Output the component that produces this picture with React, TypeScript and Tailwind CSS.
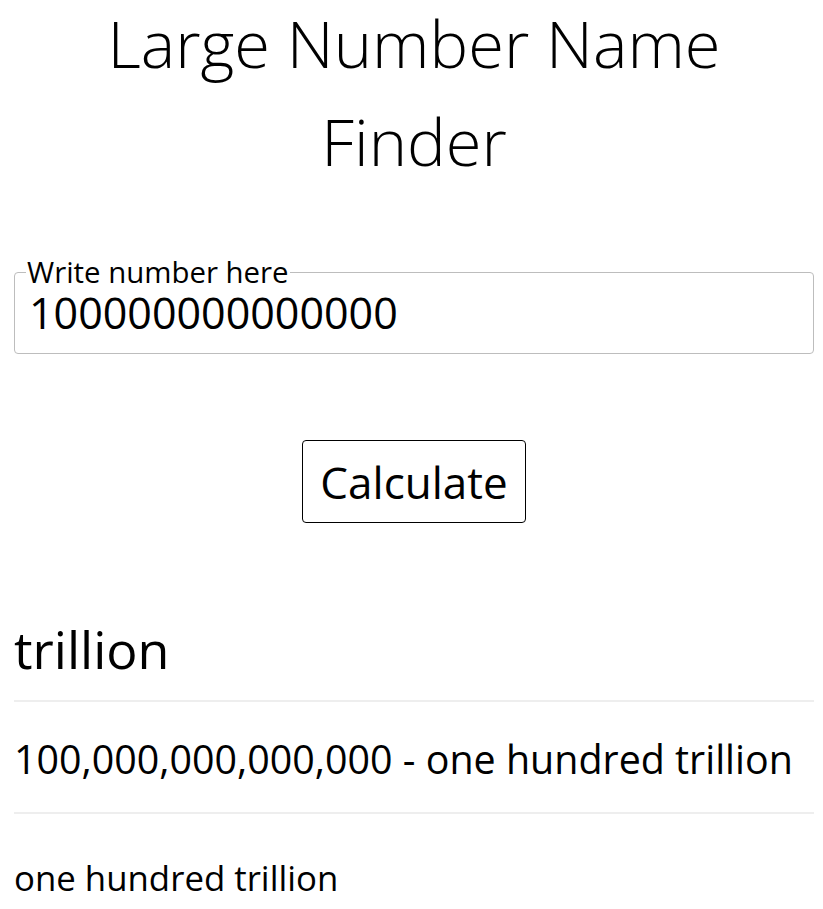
import React from "react";

export default function App() {
  return (
    <div className="pl-[14px] pr-[9px] pt-[4px] bg-white text-black" style={{ fontFamily: '"Open Sans", "Noto Sans", sans-serif' }}>
      <h1 className="text-center font-light text-[65px]">
        <span className="block leading-[78px]">Large Number Name</span>
        <span className="block leading-[118px]">Finder</span>
      </h1>
      <fieldset className="mt-[57px] border border-[#bdbdbd] rounded-[4px] px-[14px] pb-[14px] pt-0">
        <legend className="px-[1px] text-[29.4px] leading-[30px] -ml-[3px]">Write number here</legend>
        <input
          className="w-full outline-none text-[43px] leading-[52px] p-0 bg-transparent"
          defaultValue="100000000000000"
        />
      </fieldset>
      <div className="flex justify-center mt-[86px]">
        <button className="border border-black rounded-[4px] px-[17px] h-[83px] text-[44px] leading-[50px] bg-white">
          Calculate
        </button>
      </div>
      <h2 className="text-[52px] leading-[60px] mt-[96px]">trillion</h2>
      <hr className="border-0 border-t-2 border-[#eeeeee] mt-[21px]" />
      <p className="text-[39.4px] leading-[50px] mt-[32px]">100,000,000,000,000 - one hundred trillion</p>
      <hr className="border-0 border-t-2 border-[#eeeeee] mt-[28px]" />
      <p className="text-[34.8px] leading-[44px] mt-[42px]">one hundred trillion</p>
    </div>
  );
}
